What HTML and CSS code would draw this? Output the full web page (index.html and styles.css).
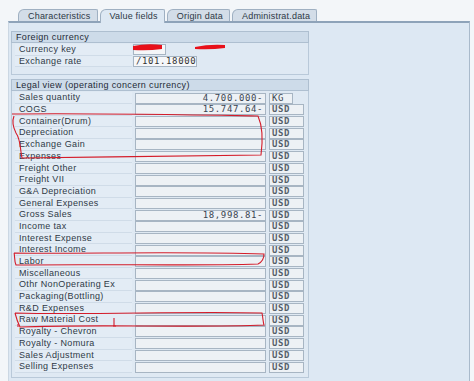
FILE: index.html
```html
<!DOCTYPE html>
<html>
<head>
    <title>Value fields</title>
    <link rel="stylesheet" href="styles.css">
</head>
<body>
    <div class="tabs">
        <div class="tab">Characteristics</div>
        <div class="tab active">Value fields</div>
        <div class="tab">Origin data</div>
        <div class="tab">Administrat.data</div>
    </div>
    <div class="panel">
        <div class="group small">
            <div class="group-title">Foreign currency</div>
            <div class="row">
                <div class="label">Currency key</div>
                <div class="field key"></div>
            </div>
            <div class="row">
                <div class="label">Exchange rate</div>
                <div class="field rate">/101.18000</div>
            </div>
        </div>

        <div class="group">
            <div class="group-title">Legal view (operating concern currency)</div>
            <div id="rows"></div>
        </div>

        <svg class="marks" width="474" height="381" viewBox="0 0 474 381">
            <path d="M133 46 q14 -3 29 -1 l0 4 q-14 2 -29 1 z" fill="#e8101a"/>
            <path d="M195 47 q14 -3 30 -2 l0 3 q-15 2 -30 1 z" fill="#e8101a"/>
            <g fill="none" stroke="#d41c2a" stroke-width="1.1">
                <path d="M12 114 C90 113 200 115 258 116 C262 125 263 140 261 155 C200 156 100 157 22 158 C20 150 21 140 16 133 C13 127 12 121 14 116"/>
                <path d="M14 253 C80 254 180 251 264 254 C264 258 262 262 258 264 C200 266 100 264 16 265 C14 260 15 256 14 253"/>
                <path d="M15 313 C90 315 190 311 262 313 C263 318 263 322 264 325 C200 328 90 324 20 327 C17 321 16 317 15 313"/>
                <path d="M114 318 l0 8 M113 326 l3 0 M18 324 l0 3"/>
            </g>
        </svg>
    </div>

    <script src="app.js"></script>
</body>
</html>
```

FILE: app.js
```js
const lines = [
    ['Sales quantity', '4.700.000-', 'KG'],
    ['COGS', '15.747.64-', 'USD'],
    ['Container(Drum)', '', 'USD'],
    ['Depreciation', '', 'USD'],
    ['Exchange Gain', '', 'USD'],
    ['Expenses', '', 'USD'],
    ['Freight Other', '', 'USD'],
    ['Freight VII', '', 'USD'],
    ['G&A Depreciation', '', 'USD'],
    ['General Expenses', '', 'USD'],
    ['Gross Sales', '18,998.81-', 'USD'],
    ['Income tax', '', 'USD'],
    ['Interest Expense', '', 'USD'],
    ['Interest Income', '', 'USD'],
    ['Labor', '', 'USD'],
    ['Miscellaneous', '', 'USD'],
    ['Othr NonOperating Ex', '', 'USD'],
    ['Packaging(Bottling)', '', 'USD'],
    ['R&D Expenses', '', 'USD'],
    ['Raw Material Cost', '', 'USD'],
    ['Royalty - Chevron', '', 'USD'],
    ['Royalty - Nomura', '', 'USD'],
    ['Sales Adjustment', '', 'USD'],
    ['Selling Expenses', '', 'USD']
];

const rows = document.getElementById('rows');
rows.innerHTML = lines.map(([label, value, unit]) => `
    <div class="row">
        <div class="label">${label.replace('&', '&amp;')}</div>
        <div class="field value">${value}</div>
        <div class="field unit${unit === 'KG' ? ' kg' : ''}">${unit}</div>
    </div>
`).join('');
```

FILE: styles.css
```css
body {
    margin: 0;
    width: 474px;
    height: 381px;
    overflow: hidden;
    background: #f3f6f9;
    font-family: "Liberation Sans", Arial, sans-serif;
    font-size: 9px;
    color: #2a3440;
    letter-spacing: 0.35px;
}
.tabs {
    display: flex;
    gap: 2px;
    padding: 9px 0 0 18px;
    height: 12px;
}
.tab {
    height: 12px;
    line-height: 12px;
    padding: 0 6px 0 9px;
    background: #d3dde8;
    border: 1px solid #9fb0c2;
    border-bottom: none;
    border-radius: 6px 2px 0 0;
    color: #2d3845;
    letter-spacing: 0.2px;
}
.tab.active {
    background: #dde8f3;
    position: relative;
    z-index: 1;
    height: 13px;
}
.panel {
    position: relative;
    box-sizing: border-box;
    margin: 0 4px 0 8px;
    height: 360px;
    background: #dde8f3;
    border-top: 2px solid #8ea3b9;
    border-right: 1px solid #a9bacb;
    border-left: 1px solid #cbd7e3;
    padding: 8px 0 0 2px;
}
.group {
    width: 296px;
    background: #dfe9f3;
    border: 1px solid #b9c9d9;
    border-top: none;
    padding-bottom: 4px;
    margin-bottom: 4px;
}
.group.small {
    padding-bottom: 7px;
}
.group-title {
    height: 10px;
    line-height: 10px;
    padding-left: 4px;
    background: #cddbe9;
    border: 1px solid #aebfd0;
    margin: 0 -1px 1px -1px;
    color: #1e2a36;
}
.row {
    display: flex;
    align-items: center;
    height: 11.7px;
}
.label {
    width: 113px;
    height: 10.7px;
    line-height: 10px;
    margin-left: 3px;
    padding-left: 4px;
    background: #e3ecf5;
    border-bottom: 1px solid #d0dce8;
    white-space: nowrap;
    color: #2f3a46;
}
.field {
    height: 9px;
    line-height: 9px;
    background: #edf1f5;
    border: 1px solid #a7b5c3;
    font-family: "DejaVu Sans Mono", monospace;
    font-size: 9px;
    letter-spacing: 0.6px;
    color: #3a4450;
    box-sizing: content-box;
}
.key {
    width: 31px;
    margin-left: 1px;
    background: #f4f6f8;
}
.rate {
    width: 60px;
    margin-left: 1px;
    padding-left: 2px;
    background: #f6f7f9;
    color: #333;
}
.value {
    width: 127px;
    margin-left: 3px;
    padding-right: 2px;
    text-align: right;
}
.unit {
    width: 31px;
    margin-left: 3px;
    padding-left: 2px;
    font-weight: bold;
    color: #555f6a;
}
.unit.kg {
    width: 20px;
    font-weight: normal;
    color: #3a4450;
}
.marks {
    position: absolute;
    left: -9px;
    top: -23px;
    pointer-events: none;
}
```
